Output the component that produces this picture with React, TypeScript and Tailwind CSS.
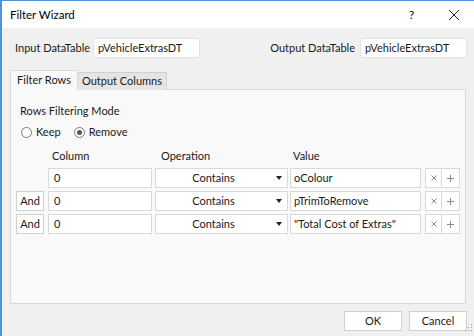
import React from "react";

const font = { fontFamily: 'Lato, "Noto Sans", sans-serif' };

function Row({ and, value }: { and: boolean; value: string }) {
  return (
    <div className="flex h-[20px] items-stretch">
      {and ? (
        <div className="w-[28px] border border-[#d0d0d0] bg-white flex items-center justify-center text-[#1a1a1a]">And</div>
      ) : (
        <div className="w-[28px]" />
      )}
      <div className="ml-[4px] w-[104px] border border-[#d9d9d9] bg-white flex items-center pl-[5px] text-[#1a1a1a]">0</div>
      <div className="ml-[3px] w-[133px] border border-[#d9d9d9] bg-white flex items-center text-[#1a1a1a]">
        <div className="flex-1 text-center">Contains</div>
        <svg width="16" height="8" viewBox="0 0 16 8">
          <path d="M5 2 L11 2 L8 6 Z" fill="#222" />
        </svg>
      </div>
      <div className="ml-[2px] w-[131px] border border-[#d9d9d9] bg-white flex items-center pl-[3px] text-[#1a1a1a] whitespace-nowrap">{value}</div>
      <div className="ml-[4px] w-[17px] border border-[#d9d9d9] bg-white flex items-center justify-center">
        <svg width="6" height="6" viewBox="0 0 6 6">
          <path d="M0.5 0.5 L5.5 5.5 M5.5 0.5 L0.5 5.5" stroke="#8a8a8a" strokeWidth="1" />
        </svg>
      </div>
      <div className="w-[18px] border border-l-0 border-[#d9d9d9] bg-white flex items-center justify-center">
        <svg width="7" height="7" viewBox="0 0 7 7">
          <path d="M3.5 0 L3.5 7 M0 3.5 L7 3.5" stroke="#8a8a8a" strokeWidth="1" />
        </svg>
      </div>
    </div>
  );
}

export default function App() {
  return (
    <div style={font} className="w-[474px] h-[336px] border-l-2 border-t border-[#4f93dc] bg-[#f0f0f0] flex flex-col relative overflow-hidden text-[11px]">
      <div className="h-[27px] bg-white flex items-center pl-[8px] text-[11.5px] text-black shrink-0">
        <span className="flex-1">Filter Wizard</span>
        <span className="w-[10px] mr-[29px]">?</span>
        <svg width="12" height="12" viewBox="0 0 12 12" className="mr-[14px]">
          <path d="M1 1 L11 11 M11 1 L1 11" stroke="#222" strokeWidth="1" />
        </svg>
      </div>
      <div className="flex items-center mt-[10px] h-[20px] text-[#1a1a1a]">
        <span className="ml-[13px] w-[78px] whitespace-nowrap">Input DataTable</span>
        <div className="w-[107px] h-[20px] bg-white border border-[#e3e3e3] flex items-center pl-[4px]">pVehicleExtrasDT</div>
        <div className="flex-1" />
        <span className="whitespace-nowrap">Output DataTable</span>
        <div className="ml-[5px] mr-[7px] w-[107px] h-[20px] bg-white border border-[#e3e3e3] flex items-center pl-[4px]">pVehicleExtrasDT</div>
      </div>
      <div className="flex items-end mt-[12px] ml-[8px] h-[20px] text-[#1a1a1a] relative z-10">
        <div className="w-[68px] h-[20px] border border-b-0 border-[#d9d9d9] bg-[#f9f9f9] flex items-center justify-center">Filter Rows</div>
        <div className="w-[89px] h-[18px] border border-l-0 border-b-0 border-[#d0d0d0] bg-[#e5e5e5] flex items-center justify-center whitespace-nowrap">Output Columns</div>
      </div>
      <div className="ml-[8px] mr-[8px] -mt-[1px] h-[215px] border border-[#d9d9d9] bg-[#f9f9f9] text-[#1a1a1a] flex flex-col">
        <div className="mt-[13px] ml-[9px] h-[16px] leading-[16px]">Rows Filtering Mode</div>
        <div className="mt-[5px] ml-[10px] h-[16px] flex items-center">
          <span className="w-[11px] h-[11px] rounded-full border border-[#7a7a7a] bg-white" />
          <span className="ml-[4px]">Keep</span>
          <span className="ml-[13px] w-[11px] h-[11px] rounded-full border border-[#7a7a7a] bg-white flex items-center justify-center">
            <span className="w-[5px] h-[5px] rounded-full bg-[#555]" />
          </span>
          <span className="ml-[4px]">Remove</span>
        </div>
        <div className="mt-[8px] h-[16px] flex items-center">
          <span className="ml-[41px] w-[109px]">Column</span>
          <span className="w-[132px]">Operation</span>
          <span>Value</span>
        </div>
        <div className="mt-[4px] ml-[5px] flex flex-col gap-[3px]">
          <Row and={false} value="oColour" />
          <Row and={true} value="pTrimToRemove" />
          <Row and={true} value={'"Total Cost of Extras"'} />
        </div>
      </div>
      <div className="flex justify-end mt-[7px] mr-[7px] text-[#1a1a1a]">
        <div className="w-[58px] h-[20px] border border-[#d0d0d0] bg-white flex items-center justify-center">OK</div>
        <div className="ml-[7px] w-[58px] h-[20px] border border-[#d0d0d0] bg-white flex items-center justify-center">Cancel</div>
      </div>
      <svg width="8" height="10" viewBox="0 0 8 10" className="absolute right-[1px] bottom-[2px]">
        <rect x="6" y="0" width="1" height="1" fill="#999" />
        <rect x="3" y="3" width="1" height="1" fill="#999" />
        <rect x="6" y="3" width="1" height="1" fill="#999" />
        <rect x="0" y="6" width="1" height="1" fill="#999" />
        <rect x="3" y="6" width="1" height="1" fill="#999" />
        <rect x="6" y="6" width="1" height="1" fill="#999" />
      </svg>
    </div>
  );
}
